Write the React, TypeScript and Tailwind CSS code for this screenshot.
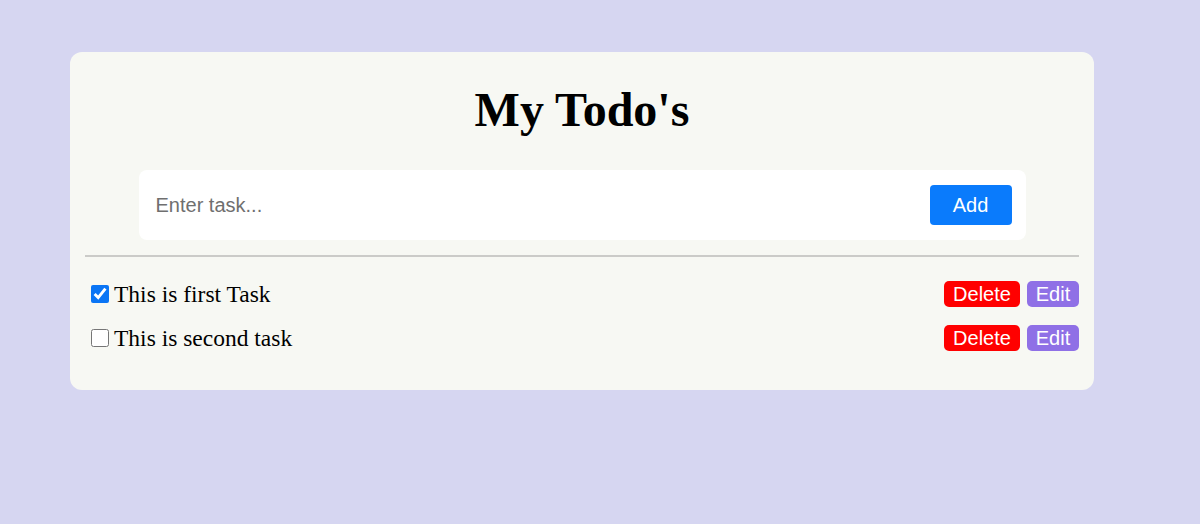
import { useState } from "react";

type Task = {
  id: number;
  text: string;
  done: boolean;
};

export default function App() {
  const [tasks, setTasks] = useState<Task[]>([
    { id: 1, text: "This is first Task", done: true },
    { id: 2, text: "This is second task", done: false },
  ]);
  const [value, setValue] = useState("");

  const toggle = (id: number) =>
    setTasks((t) => t.map((x) => (x.id === id ? { ...x, done: !x.done } : x)));

  return (
    <div className="min-h-[524px] bg-[#d6d6f1] pt-[52px] pl-[70px] font-['Liberation_Serif',serif]">
      <div className="w-[1024px] rounded-[12px] bg-[#f7f8f3] px-[15px] pt-[30px] pb-[39px]">
        <h1 className="text-center text-[48px] font-bold leading-[56px] text-black">My Todo's</h1>

        <div className="mx-auto mt-[32px] flex h-[70px] w-[887px] items-center rounded-[8px] bg-white pl-[17px] pr-[14px]">
          <input
            value={value}
            onChange={(e) => setValue(e.target.value)}
            placeholder="Enter task..."
            className="flex-1 bg-transparent font-['Liberation_Sans',sans-serif] text-[20px] text-black outline-none placeholder:text-[#6f6f6f]"
          />
          <button className="h-[40px] w-[82px] rounded-[4px] bg-[#0a7bfc] font-['Liberation_Sans',sans-serif] text-[20px] text-white">
            Add
          </button>
        </div>

        <hr className="mt-[15px] border-t-2 border-[#cbcbc8]" />

        <ul className="mt-[24px] flex flex-col gap-[18px]">
          {tasks.map((task) => (
            <li key={task.id} className="flex h-[26px] items-center pl-[6px]">
              <input
                type="checkbox"
                checked={task.done}
                onChange={() => toggle(task.id)}
                className="m-0 h-[18px] w-[18px] accent-[#0a75f5]"
              />
              <span className="ml-[5px] flex-1 pt-[2px] text-[23.5px] text-black">{task.text}</span>
              <button className="h-[26px] w-[76px] rounded-[5px] bg-[#ff0000] font-['Liberation_Sans',sans-serif] text-[20px] leading-none text-white">
                Delete
              </button>
              <button className="ml-[7px] h-[26px] w-[52px] rounded-[5px] bg-[#8f70e6] font-['Liberation_Sans',sans-serif] text-[20px] leading-none text-white">
                Edit
              </button>
            </li>
          ))}
        </ul>
      </div>
    </div>
  );
}
